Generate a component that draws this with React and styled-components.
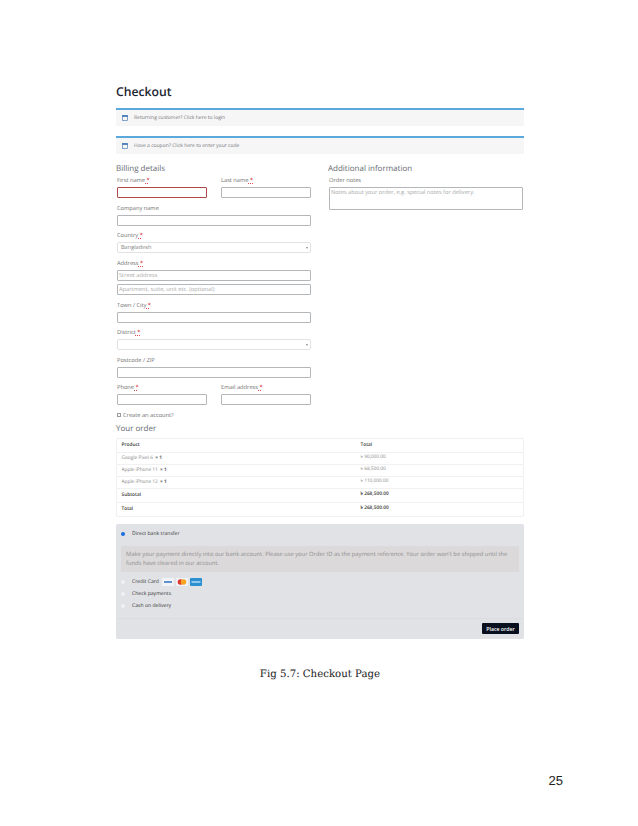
import React from "react";
import styled, { createGlobalStyle } from "styled-components";

const Global = createGlobalStyle`
  html, body { margin: 0; padding: 0; background: #fff; }
  body { font-family: "Open Sans", "Noto Sans", sans-serif; text-rendering: geometricPrecision; }
`;

const billingFields = [
  { label: "Company name" },
  { label: "Country", required: true, select: "Bangladesh" },
  { label: "Address", required: true, placeholder: "Street address", second: "Apartment, suite, unit etc. (optional)" },
  { label: "Town / City", required: true },
  { label: "District", required: true, select: " " },
  { label: "Postcode / ZIP" },
];

const orderRows = [
  { name: "Google Pixel 6", price: "৳ 90,000.00" },
  { name: "Apple iPhone 11", price: "৳ 68,500.00" },
  { name: "Apple iPhone 12", price: "৳ 110,000.00" },
];

function CalendarIcon() {
  return (
    <svg width="6" height="6" viewBox="0 0 6 6">
      <rect x="0.4" y="0.4" width="5.2" height="5.2" fill="none" stroke="#4f7fb5" strokeWidth="0.7" />
      <rect x="0.4" y="0.4" width="5.2" height="1.4" fill="#2f6fb0" />
    </svg>
  );
}

function CardIcons() {
  return (
    <Cards>
      <svg width="12" height="8" viewBox="0 0 12 8">
        <rect width="12" height="8" rx="1" fill="#f1f3f6" />
        <rect x="2" y="3.2" width="8" height="1.6" fill="#3a7cc0" />
      </svg>
      <svg width="12" height="8" viewBox="0 0 12 8">
        <rect width="12" height="8" rx="1" fill="#f1f3f6" />
        <circle cx="4.5" cy="4" r="2.8" fill="#e2382b" />
        <circle cx="7.5" cy="4" r="2.8" fill="#f5a623" />
      </svg>
      <svg width="12" height="8" viewBox="0 0 12 8">
        <rect width="12" height="8" rx="1" fill="#2b8fd0" />
        <rect x="1.5" y="3" width="9" height="2" fill="#8fc8ec" />
      </svg>
    </Cards>
  );
}

function FieldLabel({ label, required }) {
  return (
    <Label>
      {label}
      {required && <Req> *</Req>}
    </Label>
  );
}

export default function App() {
  return (
    <Page>
      <Global />
      <Title>Checkout</Title>
      <Notice>
        <CalendarIcon />
        Returning customer? Click here to login
      </Notice>
      <Notice>
        <CalendarIcon />
        Have a coupon? Click here to enter your code
      </Notice>

      <Columns>
        <div>
          <SectionTitle>Billing details</SectionTitle>
          <Pair>
            <Field>
              <FieldLabel label="First name" required />
              <Input invalid />
            </Field>
            <Field>
              <FieldLabel label="Last name" required />
              <Input />
            </Field>
          </Pair>
          {billingFields.map((f) => (
            <Field key={f.label}>
              <FieldLabel label={f.label} required={f.required} />
              {f.select ? (
                <Select>
                  {f.select}
                  <Caret />
                </Select>
              ) : (
                <Input>{f.placeholder}</Input>
              )}
              {f.second && <SecondInput>{f.second}</SecondInput>}
            </Field>
          ))}
          <Pair>
            <Field>
              <FieldLabel label="Phone" required />
              <Input />
            </Field>
            <Field>
              <FieldLabel label="Email address" required />
              <Input />
            </Field>
          </Pair>
          <CheckRow>
            <CheckBox />
            Create an account?
          </CheckRow>
        </div>
        <div>
          <SectionTitle>Additional information</SectionTitle>
          <Field>
            <FieldLabel label="Order notes" />
            <TextArea>Notes about your order, e.g. special notes for delivery.</TextArea>
          </Field>
        </div>
      </Columns>

      <OrderTitle>Your order</OrderTitle>
      <OrderTable>
        <HeadRow>
          <span>Product</span>
          <span>Total</span>
        </HeadRow>
        {orderRows.map((r) => (
          <ItemRow key={r.name}>
            <span>
              {r.name} <Qty>× 1</Qty>
            </span>
            <span>{r.price}</span>
          </ItemRow>
        ))}
        <TotalRow>
          <span>Subtotal</span>
          <span>৳ 268,500.00</span>
        </TotalRow>
        <TotalRow last>
          <span>Total</span>
          <span>৳ 268,500.00</span>
        </TotalRow>
      </OrderTable>

      <Payment>
        <Methods>
          <Method>
            <Radio checked />
            Direct bank transfer
          </Method>
          <BankNote>
            Make your payment directly into our bank account. Please use your Order ID as the payment reference. Your
            order won't be shipped until the funds have cleared in our account.
          </BankNote>
          <MethodList>
            <Method>
              <Radio />
              Credit Card
              <CardIcons />
            </Method>
            <Method>
              <Radio />
              Check payments
            </Method>
            <Method>
              <Radio />
              Cash on delivery
            </Method>
          </MethodList>
        </Methods>
        <PlaceBar>
          <PlaceButton>Place order</PlaceButton>
        </PlaceBar>
      </Payment>

      <Caption>Fig 5.7: Checkout Page</Caption>
      <PageNumber>25</PageNumber>
    </Page>
  );
}

const Page = styled.div`
  width: 638px;
  height: 826px;
  box-sizing: border-box;
  padding: 83px 114px 0 116px;
  overflow: hidden;
`;

const Title = styled.h1`
  margin: 0 0 7px;
  font-size: 12.2px;
  line-height: 18px;
  font-weight: 600;
  color: #1b2530;
`;

const Notice = styled.div`
  height: 16px;
  margin-bottom: 10px;
  padding-left: 6px;
  display: flex;
  align-items: center;
  gap: 6px;
  background: #f6f6f7;
  border-top: 2px solid #5aa8dc;
  font-size: 5px;
  color: #777;
`;

const Columns = styled.div`
  display: grid;
  grid-template-columns: 196px 196px;
  column-gap: 16px;
  margin-top: 9px;
`;

const SectionTitle = styled.h3`
  margin: 0;
  font-size: 8px;
  line-height: 10px;
  font-weight: 400;
  color: #666a6f;
`;

const Pair = styled.div`
  display: grid;
  grid-template-columns: 92px 92px;
  column-gap: 12px;
`;

const Field = styled.div`
  padding: 0 1px;
  margin-bottom: 3.5px;
`;

const Label = styled.div`
  font-size: 5.7px;
  line-height: 13px;
  color: #6e6e6e;
  white-space: nowrap;
`;

const Req = styled.span`
  color: #e04a52;
  text-decoration: underline dotted 0.5px;
  font-weight: 700;
`;

const Input = styled.div`
  box-sizing: border-box;
  height: 11px;
  padding: 0 1px;
  border: 1px solid ${(p) => (p.invalid ? "#b04a4a" : "#b4b7ba")};
  border-radius: 1px;
  background: #fff;
  font-size: 5.7px;
  line-height: 9px;
  color: #a8a8a8;
  white-space: nowrap;
`;

const SecondInput = styled(Input)`
  margin-top: 3.5px;
`;

const Select = styled.div`
  position: relative;
  box-sizing: border-box;
  height: 11px;
  padding: 0 3px;
  border: 1px solid #e2e2e2;
  border-radius: 2px;
  background: #fff;
  font-size: 5.6px;
  line-height: 9px;
  color: #808080;
  white-space: pre;
`;

const Caret = styled.span`
  position: absolute;
  right: 2px;
  top: 3.5px;
  border-left: 1.5px solid transparent;
  border-right: 1.5px solid transparent;
  border-top: 2px solid #888;
`;

const CheckRow = styled.div`
  display: flex;
  align-items: center;
  gap: 2px;
  padding-left: 1px;
  margin-top: 2px;
  font-size: 5.7px;
  line-height: 9px;
  color: #6e6e6e;
`;

const CheckBox = styled.span`
  box-sizing: border-box;
  width: 4px;
  height: 4px;
  border: 0.5px solid #999;
  background: #fff;
`;

const TextArea = styled.div`
  box-sizing: border-box;
  height: 23px;
  padding: 0 1px;
  border: 1px solid #b4b7ba;
  border-radius: 1px;
  font-size: 5.7px;
  line-height: 9px;
  color: #a8a8a8;
`;

const OrderTitle = styled.h3`
  margin: 3px 0 4px;
  font-size: 8px;
  line-height: 11px;
  font-weight: 400;
  color: #666a6f;
`;

const OrderTable = styled.div`
  border: 0.5px solid #f0f0f0;
  border-radius: 2px;
  margin-bottom: 7px;
`;

const Row = styled.div`
  display: grid;
  grid-template-columns: 239px 1fr;
  padding: 0 4.5px;
  align-items: center;
  font-size: 4.8px;
  white-space: nowrap;
`;

const HeadRow = styled(Row)`
  height: 13px;
  font-weight: 600;
  color: #3a3a3a;
  border-bottom: 1px solid #f1f1f1;
`;

const ItemRow = styled(Row)`
  height: 11px;
  color: #8a8a8a;
  border-bottom: 1px solid #f1f1f1;
`;

const TotalRow = styled(Row)`
  height: 13px;
  font-weight: 600;
  color: #3a3a3a;
  border-bottom: ${(p) => (p.last ? "none" : "1px solid #f1f1f1")};
`;

const Qty = styled.strong`
  color: #666;
  margin-left: 1px;
`;

const Payment = styled.div`
  background: #e1e2e6;
  border-radius: 2px;
  height: 115px;
  display: flex;
  flex-direction: column;
`;

const Methods = styled.div`
  flex: 1;
  padding: 4px 5px 0 5px;
  border-bottom: 1px solid #dbdce0;
`;

const Method = styled.div`
  display: flex;
  align-items: center;
  height: 12px;
  font-size: 5.1px;
  color: #333;
`;

const Radio = styled.span`
  width: 4px;
  height: 4px;
  border-radius: 50%;
  margin-right: 7px;
  background: ${(p) => (p.checked ? "#1a6fe0" : "#f0f0f2")};
`;

const BankNote = styled.div`
  margin: 6px 0 4px;
  padding: 4px 5px;
  height: 18px;
  background: #dbd9d9;
  font-size: 5.8px;
  line-height: 9px;
  color: #8f8f91;
`;

const MethodList = styled.div`
  display: flex;
  flex-direction: column;
`;

const Cards = styled.span`
  display: inline-flex;
  gap: 2px;
  margin-left: 3px;
`;

const PlaceBar = styled.div`
  height: 20px;
  padding-right: 5px;
  display: flex;
  align-items: center;
  justify-content: flex-end;
`;

const PlaceButton = styled.button`
  width: 37px;
  height: 11px;
  padding: 0;
  border: none;
  border-radius: 1px;
  background: #08101f;
  color: #fff;
  font-family: inherit;
  font-size: 5.2px;
  font-weight: 600;
`;

const Caption = styled.div`
  margin-top: 28px;
  text-align: center;
  font-family: "DejaVu Serif", "Liberation Serif", serif;
  font-size: 10.2px;
  line-height: 16px;
  color: #222;
`;

const PageNumber = styled.div`
  margin: 90px -39px 0 0;
  text-align: right;
  font-family: "Liberation Sans", sans-serif;
  font-size: 13px;
  line-height: 15px;
  color: #222;
`;
